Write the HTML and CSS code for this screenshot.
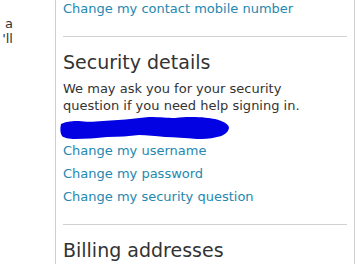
FILE: index.html
```html
<!DOCTYPE html>
<html lang="en">
<head>
<meta charset="utf-8">
<title>Account settings</title>
<link rel="stylesheet" href="styles.css">
</head>
<body>
<div class="page">
  <aside class="side">
    <div class="side-line">a</div>
    <div class="side-line">'ll</div>
  </aside>
  <main class="panel">
    <section class="sec">
      <a class="link" href="#">Change my contact mobile number</a>
    </section>
    <hr class="sep">
    <section class="sec">
      <h2 class="heading">Security details</h2>
      <p class="text">We may ask you for your security<br>question if you need help signing in.</p>
      <div class="redact">
        <svg class="scribble" width="180" height="28" viewBox="0 0 180 28" aria-hidden="true">
          <path d="M-2 10 C4 7 10 7 16 7 C22 8 30 8 40 7 C55 6 70 5 86 3 C98 3 104 4 112 4 C118 3 122 3 128 3 C140 3 146 4 152 5 C160 7 166 10 166 14 C165 19 160 22 154 23 C146 25 140 25 134 25 C122 24 112 23 102 23 C92 22 84 21 76 21 C66 22 56 23 44 23 C34 24 22 25 12 25 C6 25 1 24 -1 22 C-3 19 -3 14 -2 10 Z" fill="#0202e2"/>
        </svg>
      </div>
      <ul class="links">
        <li><a class="link" href="#">Change my username</a></li>
        <li><a class="link" href="#">Change my password</a></li>
        <li><a class="link" href="#">Change my security question</a></li>
      </ul>
    </section>
    <hr class="sep">
    <section class="sec">
      <h2 class="heading">Billing addresses</h2>
    </section>
  </main>
</div>
</body>
</html>
```

FILE: styles.css
```css
html, body {
  margin: 0;
  padding: 0;
  background: #ffffff;
}
body {
  font-family: "DejaVu Sans", Verdana, sans-serif;
  font-size: 13px;
  line-height: 17px;
  color: #333333;
  overflow: hidden;
}
.page {
  display: flex;
  align-items: stretch;
  height: 264px;
}
.side {
  width: 13px;
  margin-right: 42px;
  padding-top: 16px;
  flex: none;
}
.side-line {
  display: flex;
  justify-content: flex-end;
  line-height: 15px;
  white-space: nowrap;
}
.panel {
  width: 284px;
  flex: none;
  border-left: 1px solid #cfcfcf;
  border-right: 1px solid #cfcfcf;
  padding: 0 7px;
}
.sec {
  display: block;
}
.link {
  color: #2488b0;
  text-decoration: none;
}
.sep {
  border: 0;
  border-top: 1px solid #d2d2d2;
  margin: 19px 0 14px;
  height: 0;
}
.heading {
  margin: 0;
  font-size: 19px;
  line-height: 22px;
  font-weight: normal;
  color: #333333;
}
.text {
  margin: 7px 0 0;
}
.redact {
  height: 28px;
}
.scribble {
  display: block;
  overflow: visible;
}
.links {
  list-style: none;
  margin: 0;
  padding: 0;
  display: flex;
  flex-direction: column;
  gap: 6px;
}
```
